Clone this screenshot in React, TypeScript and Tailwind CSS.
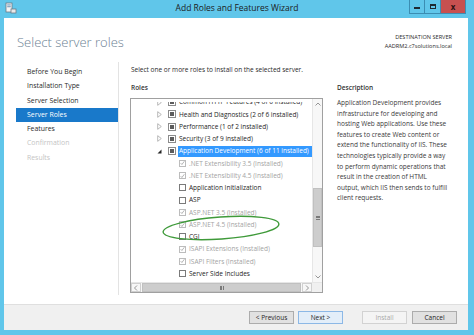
import React from 'react';

type NavState = 'normal' | 'active' | 'disabled';

const navItems: { label: string; state: NavState }[] = [
  { label: 'Before You Begin', state: 'normal' },
  { label: 'Installation Type', state: 'normal' },
  { label: 'Server Selection', state: 'normal' },
  { label: 'Server Roles', state: 'active' },
  { label: 'Features', state: 'normal' },
  { label: 'Confirmation', state: 'disabled' },
  { label: 'Results', state: 'disabled' },
];

interface TreeRow {
  label: string;
  kind: 'group' | 'item';
  open?: boolean;
  selected?: boolean;
  checked?: boolean;
  installed?: boolean;
}

const rows: TreeRow[] = [
  { label: 'Common HTTP Features (4 of 6 installed)', kind: 'group' },
  { label: 'Health and Diagnostics (2 of 6 installed)', kind: 'group' },
  { label: 'Performance (1 of 2 installed)', kind: 'group' },
  { label: 'Security (3 of 9 installed)', kind: 'group' },
  { label: 'Application Development (6 of 11 installed)', kind: 'group', open: true, selected: true },
  { label: '.NET Extensibility 3.5 (Installed)', kind: 'item', checked: true, installed: true },
  { label: '.NET Extensibility 4.5 (Installed)', kind: 'item', checked: true, installed: true },
  { label: 'Application Initialization', kind: 'item' },
  { label: 'ASP', kind: 'item' },
  { label: 'ASP.NET 3.5 (Installed)', kind: 'item', checked: true, installed: true },
  { label: 'ASP.NET 4.5 (Installed)', kind: 'item', checked: true, installed: true },
  { label: 'CGI', kind: 'item' },
  { label: 'ISAPI Extensions (Installed)', kind: 'item', checked: true, installed: true },
  { label: 'ISAPI Filters (Installed)', kind: 'item', checked: true, installed: true },
  { label: 'Server Side Includes', kind: 'item' },
];

const descLines = [
  'Application Development provides',
  'infrastructure for developing and',
  'hosting Web applications. Use these',
  'features to create Web content or',
  'extend the functionality of IIS. These',
  'technologies typically provide a way',
  'to perform dynamic operations that',
  'result in the creation of HTML',
  'output, which IIS then sends to fulfill',
  'client requests.',
];

function Chevron({ dir }: { dir: 'up' | 'down' | 'left' | 'right' }) {
  const paths = {
    up: 'M1.5 5.5 L4 3 L6.5 5.5',
    down: 'M1.5 2.5 L4 5 L6.5 2.5',
    left: 'M5 1.5 L2.5 4 L5 6.5',
    right: 'M3 1.5 L5.5 4 L3 6.5',
  };
  return (
    <svg width="8" height="8" viewBox="0 0 8 8">
      <path d={paths[dir]} fill="none" stroke="#8a8a8a" strokeWidth="0.9" />
    </svg>
  );
}

function CheckBox({ checked, dim }: { checked?: boolean; dim?: boolean }) {
  return (
    <div className={`w-[7px] h-[7px] border ${dim ? 'border-[#bcbcbc]' : 'border-[#7a7a7a]'} bg-white flex items-center justify-center`}>
      {checked && (
        <svg width="6" height="6" viewBox="0 0 6 6">
          <path d="M0.8 3.2 L2.3 4.8 L5.2 0.9" fill="none" stroke="#9a9a9a" strokeWidth="0.9" />
        </svg>
      )}
    </div>
  );
}

function TreeLine({ row }: { row: TreeRow }) {
  if (row.kind === 'group') {
    return (
      <div className="h-[12.25px] flex items-center">
        <div className="w-[23px]" />
        <div className="w-[11px] flex items-center justify-center">
          {row.open ? (
            <svg width="5" height="5" viewBox="0 0 5 5">
              <path d="M4.5 0.5 L4.5 4.5 L0.5 4.5 Z" fill="#262626" />
            </svg>
          ) : (
            <svg width="5" height="7" viewBox="0 0 5 7">
              <path d="M0.7 0.7 L4.3 3.5 L0.7 6.3 Z" fill="none" stroke="#a6a6a6" strokeWidth="0.8" />
            </svg>
          )}
        </div>
        <div className="w-[8px] h-[8px] ml-[3px] border border-[#8c8c8c] bg-white flex items-center justify-center">
          <div className="w-[4px] h-[4px] bg-[#5c5c5c]" />
        </div>
        <div
          className={`ml-[2px] h-[11px] pl-[1px] flex-1 flex items-center whitespace-nowrap overflow-hidden ${
            row.selected ? 'bg-[#3399ff] text-white' : 'text-[#1e1e1e]'
          }`}
        >
          {row.label}
        </div>
      </div>
    );
  }
  return (
    <div className="h-[12.25px] flex items-center">
      <div className="w-[48px]" />
      <CheckBox checked={row.checked} dim={row.installed} />
      <div className={`ml-[3px] whitespace-nowrap ${row.installed ? 'text-[#a3a3a3]' : 'text-[#1e1e1e]'}`}>{row.label}</div>
    </div>
  );
}

function Btn({ label, variant }: { label: string; variant?: 'default' | 'disabled' }) {
  const style =
    variant === 'default'
      ? 'bg-[#e3eef9] border-[#8cb8e6] text-[#1e1e1e]'
      : variant === 'disabled'
      ? 'bg-[#f4f4f4] border-[#d2d2d2] text-[#a8a8a8]'
      : 'bg-[#e1e1e1] border-[#acacac] text-[#1e1e1e]';
  return (
    <div className={`w-[45px] h-[13px] border ${style} flex items-center justify-center text-[6.5px]`}>{label}</div>
  );
}

export default function App() {
  return (
    <div className="w-[474px] h-[335px] bg-[#60c6ea] flex flex-col overflow-hidden font-['Open_Sans',sans-serif]">
      {/* title bar */}
      <div className="h-[18px] grid grid-cols-[1fr_auto_1fr]">
        <div className="flex items-start pl-[5px] pt-[2px]">
          <svg width="12" height="12" viewBox="0 0 12 12">
            <rect x="1" y="1" width="6" height="9" fill="#f4f4f4" stroke="#6b7c88" strokeWidth="0.8" />
            <rect x="2.2" y="2.5" width="3.6" height="0.9" fill="#5a89b0" />
            <rect x="2.2" y="4.3" width="3.6" height="0.9" fill="#5a89b0" />
            <rect x="6" y="7" width="5" height="4" fill="#e9e9e9" stroke="#6b7c88" strokeWidth="0.8" />
          </svg>
        </div>
        <div className="flex items-center text-[8.5px] text-[#1b1b1b] pb-[1px]">Add Roles and Features Wizard</div>
        <div className="flex justify-end items-start pr-[8px]">
          <div className="flex h-[14px] border border-t-0 border-[#3b8db2]">
            <div className="w-[15px] flex items-center justify-center border-r border-[#3b8db2]">
              <div className="w-[6px] h-[2px] bg-[#1e2a33] mt-[3px]" />
            </div>
            <div className="w-[16px] flex items-center justify-center border-r border-[#3b8db2]">
              <div className="w-[6px] h-[5px] border border-t-2 border-[#1e2a33]" />
            </div>
            <div className="w-[24px] bg-[#c75050] flex items-center justify-center text-[#2a1212] text-[8px] font-bold leading-none">
              x
            </div>
          </div>
        </div>
      </div>

      {/* window body */}
      <div className="flex-1 ml-[4px] mr-[6px] mb-[5px] bg-white flex flex-col">
        {/* header */}
        <div className="h-[42px] flex justify-between items-start px-[13px]">
          <div className="mt-[14px] text-[13px] font-light text-[#6d8294] leading-[20px]">Select server roles</div>
          <div className="mt-[15px] text-right text-[5.6px] leading-[9px] text-[#2b2b2b] pr-[3px]">
            <div>DESTINATION SERVER</div>
            <div>AADRM2.c7solutions.local</div>
          </div>
        </div>

        {/* main */}
        <div className="flex-1 flex">
          {/* nav */}
          <div className="w-[115px] mt-[2px] mb-[9px] border-r border-[#e3e3e3] pt-[3px] pl-[12px] text-[6.9px]">
            {navItems.map((n) => (
              <div
                key={n.label}
                className={`h-[14.3px] flex items-center pl-[11px] ${
                  n.state === 'active'
                    ? 'bg-[#1979ca] text-white'
                    : n.state === 'disabled'
                    ? 'text-[#c4c4c4]'
                    : 'text-[#2a2a2a]'
                }`}
              >
                {n.label}
              </div>
            ))}
          </div>

          {/* content */}
          <div className="flex-1 pl-[11px] pt-[5px] text-[6.5px]">
            <div className="leading-[10px] pl-[1px] text-[#2a2a2a]">Select one or more roles to install on the selected server.</div>
            <div className="flex mt-[8px]">
              <div className="w-[193px]">
                <div className="leading-[10px] pl-[1px] font-semibold text-[#333]">Roles</div>
                <div className="relative mt-[5px] h-[195px] border border-[#a0a0a0] flex flex-col">
                  <div className="flex-1 flex overflow-hidden">
                    <div className="flex-1 overflow-hidden mt-[3px]">
                      <div className="mt-[-6px]">
                        {rows.map((r) => (
                          <TreeLine key={r.label} row={r} />
                        ))}
                      </div>
                    </div>
                    <div className="w-[10px] border-l border-[#e6e6e6] bg-[#f7f7f7] flex flex-col">
                      <div className="h-[10px] flex items-center justify-center">
                        <Chevron dir="up" />
                      </div>
                      <div className="h-[79px]" />
                      <div className="h-[59px] bg-[#cdcdcd] border border-[#c0c0c0] flex items-center justify-center">
                        <div className="w-[4px] h-[4px] border-y border-[#7a7a7a] flex items-center">
                          <div className="w-full h-[1px] bg-[#7a7a7a]" />
                        </div>
                      </div>
                      <div className="flex-1" />
                      <div className="h-[10px] flex items-center justify-center">
                        <Chevron dir="down" />
                      </div>
                    </div>
                  </div>
                  <div className="h-[10px] flex border-t border-[#e6e6e6] bg-[#f7f7f7]">
                    <div className="w-[10px] flex items-center justify-center border border-[#d0d0d0]">
                      <Chevron dir="left" />
                    </div>
                    <div className="w-[159px] ml-[1px] bg-[#cdcdcd] border border-[#c0c0c0] flex items-center justify-center">
                      <div className="w-[4px] h-[4px] border-x border-[#7a7a7a] flex justify-center">
                        <div className="w-[1px] h-full bg-[#7a7a7a]" />
                      </div>
                    </div>
                    <div className="flex-1" />
                    <div className="w-[10px] flex items-center justify-center border border-[#d0d0d0]">
                      <Chevron dir="right" />
                    </div>
                    <div className="w-[10px] bg-[#f0f0f0]" />
                  </div>
                  {/* annotation */}
                  <svg className="absolute left-[28px] top-[115px]" width="124" height="28" viewBox="0 0 124 28">
                    <ellipse
                      cx="62"
                      cy="14"
                      rx="58"
                      ry="11"
                      transform="rotate(-4 62 14)"
                      fill="none"
                      stroke="#3f9a3a"
                      strokeWidth="1.4"
                    />
                  </svg>
                </div>
              </div>
              <div className="ml-[14px] w-[124px]">
                <div className="leading-[10px] font-semibold text-[#333]">Description</div>
                <div className="mt-[5px] leading-[10.6px] text-[#3a3a3a]">
                  {descLines.map((l) => (
                    <div key={l} className="whitespace-nowrap">
                      {l}
                    </div>
                  ))}
                </div>
              </div>
            </div>
          </div>
        </div>

        {/* footer */}
        <div className="h-[26px] bg-[#f0f0f0] border-t border-[#dfdfdf] flex justify-end items-start pt-[6px] pr-[11px]">
          <Btn label="< Previous" />
          <div className="ml-[4px]">
            <Btn label="Next >" variant="default" />
          </div>
          <div className="ml-[19px]">
            <Btn label="Install" variant="disabled" />
          </div>
          <div className="ml-[5px]">
            <Btn label="Cancel" />
          </div>
        </div>
      </div>
    </div>
  );
}
